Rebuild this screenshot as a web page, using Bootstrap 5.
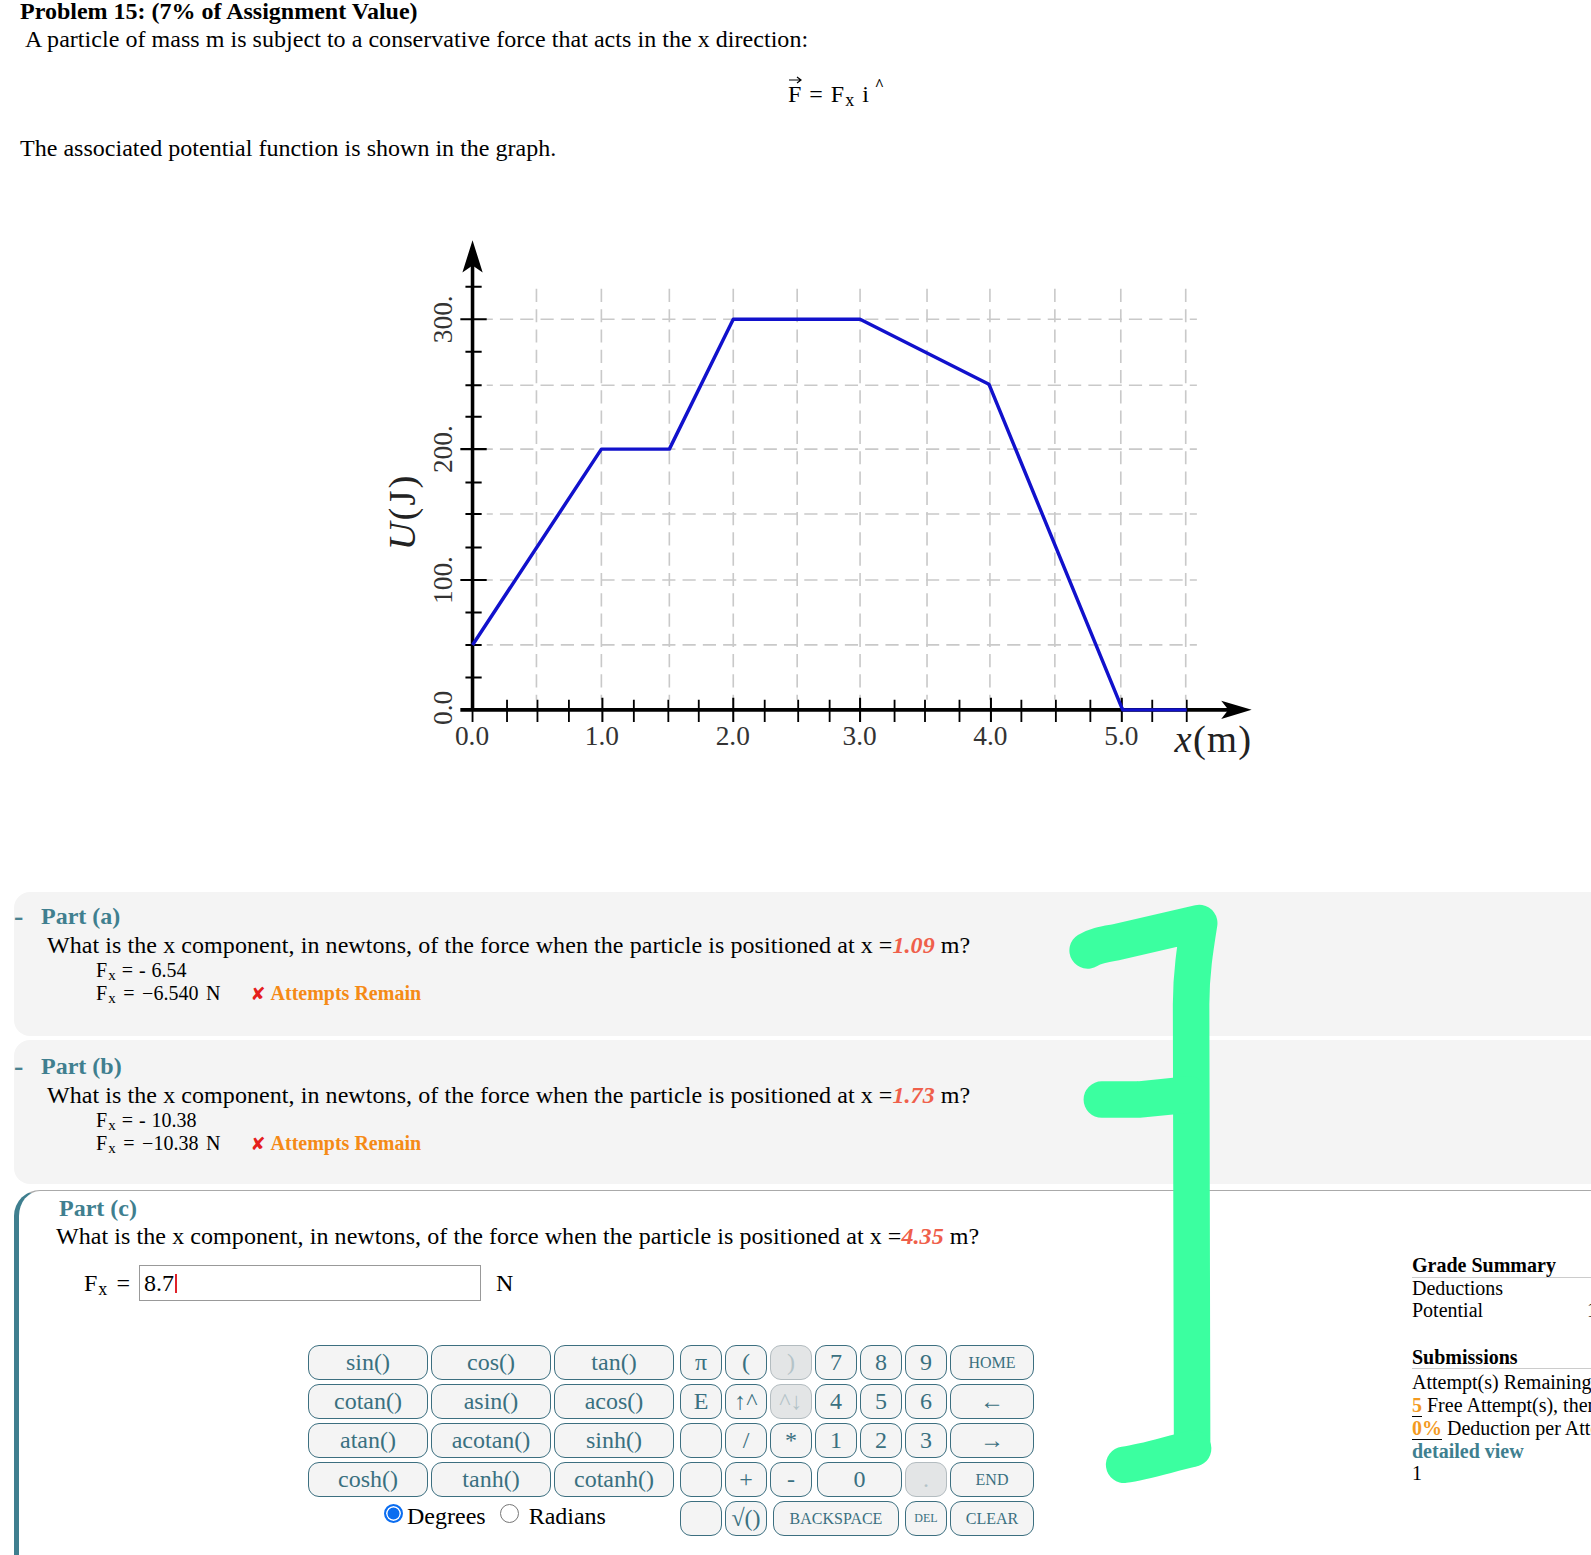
<!DOCTYPE html>
<html lang="en">
<head>
<meta charset="utf-8">
<title>Problem 15</title>
<link href="https://cdn.jsdelivr.net/npm/bootstrap@5.3.0/dist/css/bootstrap.min.css" rel="stylesheet">
<style>
html,body{height:1555px;overflow:hidden;background:#fff}
body{font-family:"Liberation Serif","Times New Roman",serif;font-size:24px;line-height:24px;color:#000;position:relative}
.sheet{width:1672px}
.q-title{font-weight:700;margin-top:-1px;margin-left:20px}
.q-intro{margin-top:4px;margin-left:25px;letter-spacing:.04px}
.q-formula{margin-top:31px;text-align:center;word-spacing:2px}
.q-text2{margin-top:27px;margin-left:20px;letter-spacing:.02px}
.graph{display:block;margin:70px 0 102px 370px;width:900px;height:560px}
.arrow-f{position:relative;display:inline-block}
.arrow-f svg{position:absolute;left:1px;top:-6px;width:13px;height:8px}
.hat{position:relative;top:-12px;font-size:16px;font-weight:700;margin-left:6px}
sub.s{font-size:18px;vertical-align:baseline;position:relative;top:4px;bottom:auto;margin-left:1px}
.part-box{margin-left:14px;background:#f4f4f4;border-radius:16px;height:144px;padding-top:12px;margin-bottom:4px}
.part-b{margin-bottom:6px;padding-top:14px}
.part-head{color:#3f7f8f;font-weight:700;display:flex}
.part-dash{width:27px;flex:none;font-size:28px;color:#4a8290}
.part-q{margin-top:5px;margin-left:33px;letter-spacing:.07px}
.val{color:#ef5f4b;font-weight:700;font-style:italic}
.ans{font-size:20px;line-height:23px;margin-left:82px;word-spacing:1px}
.ans-1{margin-top:2px}
.ans-2{word-spacing:2.6px}
.ans sub.s{font-size:15px;top:3px}
.miss{margin-left:30px;font-weight:700;color:#f58a16;word-spacing:0}
.miss b{color:#e5201c;font-family:"DejaVu Sans",sans-serif;font-size:18px;margin-right:5px}
.part-c{margin-left:14px;border-left:5px solid #3f7f8f;border-top:1px solid #aaa;border-top-left-radius:26px;height:400px;display:flex}
.c-main{flex:0 0 1393px;padding-top:5px}
.c-head{color:#3f7f8f;font-weight:700;margin-left:40px}
.c-q{margin-top:4px;margin-left:37px;letter-spacing:.07px}
.c-row{margin-top:17px;margin-left:65px;height:36px;display:flex;align-items:center}
.c-fx{word-spacing:3.2px}
.answer-wrap{position:relative;margin-left:9px;margin-right:15px}
.answer{width:342px;height:36px;border:1px solid #999;border-radius:0;padding:0 4px;font:24px/34px "Liberation Serif",serif;color:#000;background:#fff;box-shadow:none}
.caret-bar{position:absolute;left:36px;top:9px;width:1.5px;height:19px;background:#e0222a}
.calc{margin-top:44px;margin-left:289px;display:flex;flex-direction:column;gap:4px}
.calc-row{display:flex;gap:3px;height:35px}
.key{flex:none;width:42px;height:35px;padding:0;background:#f4f4f4;border:1px solid #3c6f80;border-radius:11px;color:#3a7080;font:24px/33px "Liberation Serif",serif}
.key:disabled{background:#e3e5e6;border-color:#b3bcc0;color:#b4c3c8;opacity:1}
.k-fn{width:120px}
.k-wide{width:84px}
.k-0{width:85px;margin-left:2px}
.k-back{width:126px;margin-left:3px;margin-right:3px}
.k-sm{font-size:16px}
.k-xs{font-size:12px}
.gap-k{margin-left:3px}
.calc-mode{width:366px;flex:none;display:flex;align-items:center;padding-left:76px;padding-bottom:6px;margin-right:3px}
.calc-mode .form-check-input{width:19px;height:19px;margin:-4px 0 0;flex:none;border:1px solid #777;float:none}
.calc-mode .form-check-input:checked{background-image:none;background-color:#0b6df0;border:2px solid #0b6df0;box-shadow:inset 0 0 0 1.5px #fff}
.calc-mode span{margin-left:4px}
.calc-mode .r2{margin-left:14px}
.calc-mode .l2{margin-left:10px}
.side{flex:0 0 240px;font-size:20px;line-height:22.7px;padding-top:64px}
.side-h{font-weight:700;border-bottom:1px solid #ccc;line-height:21.5px;margin-bottom:-1px}
.side-row{display:flex}
.side-row span:first-child{flex:0 0 175px}
.side-gap{margin-top:25px;margin-bottom:2px}
.ul-num{color:#f39a1f;font-weight:700;border-bottom:1px solid #000}
.side-link{color:#3f7f8f;font-weight:700}
.marker{position:absolute;left:0;top:0;width:1591px;height:1555px;pointer-events:none}
</style>
</head>
<body>
<div class="sheet">
  <div class="q-title">Problem 15: (7% of Assignment Value)</div>
  <div class="q-intro">A particle of mass m is subject to a conservative force that acts in the x direction:</div>
  <div class="q-formula"><span class="arrow-f">F<svg viewBox="0 0 13 8" xmlns="http://www.w3.org/2000/svg"><path d="M0 4H11M8 1L12 4L8 7" fill="none" stroke="#000" stroke-width="1.2"/></svg></span> = F<sub class="s">x</sub> i<span class="hat">^</span></div>
  <div class="q-text2">The associated potential function is shown in the graph.</div>

  <svg class="graph" viewBox="365 227 887 552" xmlns="http://www.w3.org/2000/svg" font-family="Liberation Serif, serif" fill="#333">
    <g stroke="#c9c9c9" stroke-width="1.6" stroke-dasharray="13 7" fill="none">
      <path stroke-dashoffset="7" d="M480 315H1180M480 380H1180M480 443H1180M480 507H1180M480 572H1180M480 636H1180"/>
      <path d="M529 285V690M593 285V690M660 285V690M723 285V690M786 285V690M848 285V690M914 285V690M976 285V690M1040 285V690M1105 285V690M1169 285V690"/>
    </g>
    <g stroke="#000" fill="none">
      <path stroke-width="3.5" d="M466 700V258M454 700H1214"/>
      <path stroke-width="2" d="M459 668H475M459 604H475M459 540H475M459 476H475M459 411H475M459 347H475M459 283H475M459 636H475M454 572H480M454 443H480M454 315H480M459 507H475M459 380H475"/>
      <path stroke-width="1.8" d="M500 690V712M530 690V712M561 690V712M625 690V712M659 690V712M689 690V712M754 690V712M787 690V712M818 690V712M882 690V712M912 690V712M946 690V712M1007 690V712M1041 690V712M1075 690V712M1136 690V712M1170 690V712M466 700V712"/>
      <path stroke-width="2" d="M594 688V712M723 688V712M848 688V712M977 688V712M1106 688V712"/>
    </g>
    <path fill="#000" d="M466 237L476 269L466 262L456 269Z"/>
    <path fill="#000" d="M1234 700L1204 691L1211 700L1204 709Z"/>
    <path fill="none" stroke="#1111cc" stroke-width="3.4" stroke-linejoin="round" d="M466 636L593 443H660L723 315H848L975 379L1106 698L1107 700H1170"/>
    <g font-size="27" text-anchor="middle">
      <text x="465.5" y="735">0.0</text><text x="593.5" y="735">1.0</text><text x="722.5" y="735">2.0</text>
      <text x="847.5" y="735">3.0</text><text x="976.5" y="735">4.0</text><text x="1105.5" y="735">5.0</text>
      <text transform="translate(446 698) rotate(-90)">0.0</text>
      <text transform="translate(446 572) rotate(-90)">100.</text>
      <text transform="translate(446 443) rotate(-90)">200.</text>
      <text transform="translate(446 315) rotate(-90)">300.</text>
    </g>
    <text transform="translate(409 505) rotate(-90)" font-size="38" text-anchor="middle" fill="#222" letter-spacing="2"><tspan font-style="italic">U</tspan>(J)</text>
    <text x="1158" y="742" font-size="38" fill="#222" letter-spacing="1.2"><tspan font-style="italic">x</tspan>(m)</text>
  </svg>

  <div class="part-box">
    <div class="part-head"><span class="part-dash">-</span><span>Part (a)</span></div>
    <div class="part-q">What is the x component, in newtons, of the force when the particle is positioned at x =<span class="val">1.09</span> m?</div>
    <div class="ans ans-1">F<sub class="s">x</sub> = - 6.54</div>
    <div class="ans ans-2">F<sub class="s">x</sub> = −6.540 N<span class="miss"><b>✘</b>Attempts Remain</span></div>
  </div>
  <div class="part-box part-b">
    <div class="part-head"><span class="part-dash">-</span><span>Part (b)</span></div>
    <div class="part-q">What is the x component, in newtons, of the force when the particle is positioned at x =<span class="val">1.73</span> m?</div>
    <div class="ans ans-1">F<sub class="s">x</sub> = - 10.38</div>
    <div class="ans ans-2">F<sub class="s">x</sub> = −10.38 N<span class="miss"><b>✘</b>Attempts Remain</span></div>
  </div>

  <div class="part-c">
    <div class="c-main">
      <div class="c-head">Part (c)</div>
      <div class="c-q">What is the x component, in newtons, of the force when the particle is positioned at x =<span class="val">4.35</span> m?</div>
      <div class="c-row">
        <span class="c-fx">F<sub class="s">x</sub> =</span>
        <div class="answer-wrap"><input class="form-control answer" value="8.7" aria-label="Fx"><span class="caret-bar"></span></div>
        <span>N</span>
      </div>
      <div class="calc">
        <div class="calc-row">
          <button class="btn key k-fn">sin()</button><button class="btn key k-fn">cos()</button><button class="btn key k-fn">tan()</button>
          <button class="btn key gap-k">π</button><button class="btn key">(</button><button class="btn key" disabled>)</button>
          <button class="btn key">7</button><button class="btn key">8</button><button class="btn key">9</button><button class="btn key k-wide k-sm">HOME</button>
        </div>
        <div class="calc-row">
          <button class="btn key k-fn">cotan()</button><button class="btn key k-fn">asin()</button><button class="btn key k-fn">acos()</button>
          <button class="btn key gap-k">E</button><button class="btn key">↑^</button><button class="btn key" disabled>^↓</button>
          <button class="btn key">4</button><button class="btn key">5</button><button class="btn key">6</button><button class="btn key k-wide">←</button>
        </div>
        <div class="calc-row">
          <button class="btn key k-fn">atan()</button><button class="btn key k-fn">acotan()</button><button class="btn key k-fn">sinh()</button>
          <button class="btn key gap-k"></button><button class="btn key">/</button><button class="btn key">*</button>
          <button class="btn key">1</button><button class="btn key">2</button><button class="btn key">3</button><button class="btn key k-wide">→</button>
        </div>
        <div class="calc-row">
          <button class="btn key k-fn">cosh()</button><button class="btn key k-fn">tanh()</button><button class="btn key k-fn">cotanh()</button>
          <button class="btn key gap-k"></button><button class="btn key">+</button><button class="btn key">-</button>
          <button class="btn key k-0">0</button><button class="btn key" disabled>.</button><button class="btn key k-wide k-sm">END</button>
        </div>
        <div class="calc-row">
          <div class="calc-mode">
            <input class="form-check-input" type="radio" name="angle" checked aria-label="Degrees"><span>Degrees</span>
            <input class="form-check-input r2" type="radio" name="angle" aria-label="Radians"><span class="l2">Radians</span>
          </div>
          <button class="btn key"></button><button class="btn key">√()</button>
          <button class="btn key k-back k-sm">BACKSPACE</button><button class="btn key k-xs">DEL</button><button class="btn key k-wide k-sm">CLEAR</button>
        </div>
      </div>
    </div>
    <div class="side">
      <div class="side-h">Grade Summary</div>
      <div class="side-row"><span>Deductions</span><span></span></div>
      <div class="side-row"><span>Potential</span><span>100%</span></div>
      <div class="side-h side-gap">Submissions</div>
      <div class="text-nowrap">Attempt(s) Remaining: 5</div>
      <div class="text-nowrap"><span class="ul-num">5</span> Free Attempt(s), then</div>
      <div class="text-nowrap"><span class="ul-num">0%</span> Deduction per Attempt</div>
      <div class="side-link">detailed view</div>
      <div>1</div>
    </div>
  </div>
</div>

<svg class="marker" viewBox="0 0 1568 1533" xmlns="http://www.w3.org/2000/svg" fill="none" stroke="#3bffa0" stroke-width="36" stroke-linecap="round" stroke-linejoin="round">
  <path d="M1072 937C1080 932 1088 931 1100 929L1182 910C1178 935 1174 960 1174 990L1175 1428"/>
  <path d="M1086 1084H1122L1172 1079"/>
  <path d="M1108 1444C1130 1441 1150 1434 1176 1428"/>
</svg>
<script src="https://cdn.jsdelivr.net/npm/bootstrap@5.3.0/dist/js/bootstrap.bundle.min.js"></script>
</body>
</html>
